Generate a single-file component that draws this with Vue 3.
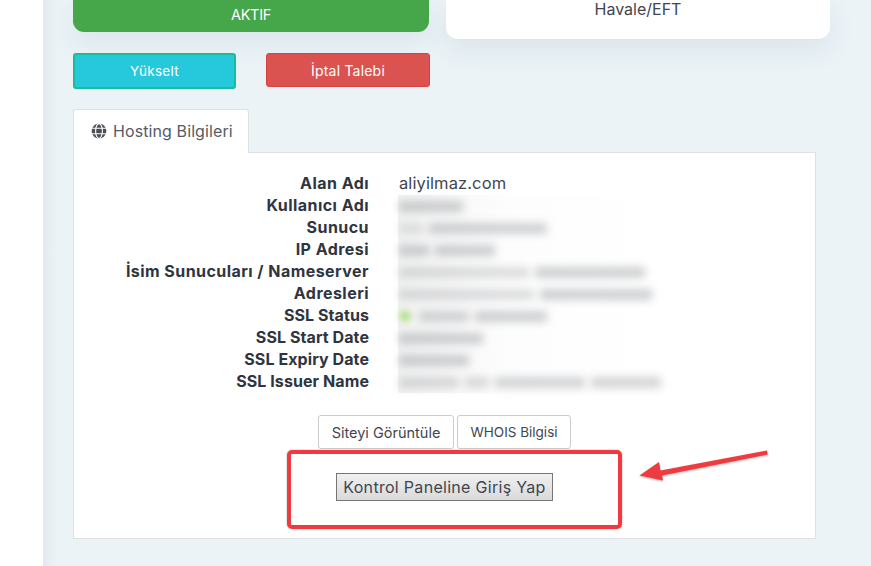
<script setup>
const rows = [
  { label: 'Alan Adı', value: 'aliyilmaz.com' },
  { label: 'Kullanıcı Adı', bars: [{ w: 64, o: 0.4 }] },
  { label: 'Sunucu', bars: [{ w: 24, o: 0.22 }, { w: 118, o: 0.38 }] },
  { label: 'IP Adresi', bars: [{ w: 30, o: 0.4 }, { w: 60, o: 0.4 }] },
  { label: 'İsim Sunucuları / Nameserver', bars: [{ w: 130, o: 0.28 }, { w: 110, o: 0.4 }] },
  { label: 'Adresleri', bars: [{ w: 135, o: 0.28 }, { w: 112, o: 0.4 }] },
  { label: 'SSL Status', green: true, bars: [{ w: 50, o: 0.35 }, { w: 72, o: 0.4 }] },
  { label: 'SSL Start Date', bars: [{ w: 84, o: 0.4 }] },
  { label: 'SSL Expiry Date', bars: [{ w: 70, o: 0.4 }] },
  { label: 'SSL Issuer Name', bars: [{ w: 60, o: 0.3 }, { w: 24, o: 0.3 }, { w: 90, o: 0.36 }, { w: 70, o: 0.36 }] }
]
</script>

<template>
  <div class="page">
    <aside class="side"></aside>
    <main class="main">
      <div class="cards">
        <div class="card-green">AKTIF</div>
        <div class="card-white">Havale/EFT</div>
      </div>
      <div class="actions">
        <button class="btn-info">Yükselt</button>
        <button class="btn-danger">İptal Talebi</button>
      </div>
      <div class="tab">
        <svg class="globe" viewBox="0 0 16 16" width="16" height="16" aria-hidden="true">
          <circle cx="8" cy="8" r="7.4" fill="#4a4f57" />
          <g fill="none" stroke="#fff" stroke-width="1.1">
            <ellipse cx="8" cy="8" rx="3.4" ry="7.4" />
            <path d="M1 5.3h14M1 10.7h14" />
          </g>
        </svg>
        <span>Hosting Bilgileri</span>
      </div>
      <section class="panel">
        <div class="info">
          <div v-for="row in rows" :key="row.label" class="row">
            <div class="label" :class="{ tight: row.label.startsWith('SSL') }">{{ row.label }}</div>
            <div v-if="row.value" class="value">{{ row.value }}</div>
            <div v-else class="masked">
              <span v-if="row.green" class="dot"></span>
              <span
                v-for="(bar, i) in row.bars"
                :key="i"
                class="bar"
                :style="{ width: bar.w + 'px', opacity: bar.o }"
              ></span>
            </div>
          </div>
        </div>
        <div class="links">
          <button class="btn-light">Siteyi Görüntüle</button>
          <button class="btn-light whois">WHOIS Bilgisi</button>
        </div>
        <div class="login">
          <button class="btn-login">Kontrol Paneline Giriş Yap</button>
        </div>
        <div class="mark"></div>
        <svg class="arrow" viewBox="0 0 140 40" width="140" height="40" aria-hidden="true">
          <path d="M129 1.5 129.8 5.5 24 26.5 25 31.5 1.5 26.5 21 13 22.5 21.5Z" fill="#ef3b3f" />
        </svg>
      </section>
    </main>
  </div>
</template>

<style scoped>
.page {
  display: flex;
  width: 871px;
  height: 566px;
  overflow: hidden;
  background: #fff;
  font-family: Inter, "Liberation Sans", sans-serif;
  color: #3f4650;
}
.side {
  flex: 0 0 43px;
  background: #fff;
}
.main {
  flex: 1;
  padding: 0 41px 0 30px;
  background: linear-gradient(90deg, #e3eaee 0, #ebf3f7 14px);
}
.cards {
  display: flex;
  align-items: flex-start;
  gap: 17px;
  height: 40px;
}
.card-green {
  flex: 0 0 356px;
  height: 32px;
  padding-top: 5px;
  box-sizing: border-box;
  border-radius: 0 0 11px 11px;
  background: #46a64a;
  color: #fff;
  font-size: 14.5px;
  letter-spacing: -0.3px;
  line-height: 20px;
  text-align: center;
  box-shadow: 0 10px 28px rgba(40, 60, 80, 0.08);
}
.card-white {
  flex: 0 0 384px;
  height: 40px;
  box-sizing: border-box;
  border-radius: 0 0 12px 12px;
  background: #fff;
  border-bottom: 1px solid #dfe4e8;
  font-size: 16px;
  line-height: 18px;
  text-align: center;
  box-shadow: 0 10px 28px rgba(40, 60, 80, 0.08);
}
.actions {
  display: flex;
  align-items: flex-start;
  gap: 30px;
  margin-top: 13px;
}
.actions button {
  font: inherit;
  color: #fff;
  border-radius: 3px;
  padding: 0;
}
.actions .btn-info {
  width: 163px;
  height: 36px;
  font-size: 13.5px;
  letter-spacing: 0.3px;
  background: #26c8dc;
  border: 2px solid #1abc9c;
}
.actions .btn-danger {
  width: 164px;
  height: 34px;
  font-size: 14px;
  letter-spacing: 0.2px;
  background: #da5350;
  border: 1px solid #d9413e;
}
.tab {
  display: flex;
  align-items: center;
  gap: 6px;
  position: relative;
  z-index: 1;
  width: 176px;
  height: 44px;
  margin-top: 20px;
  margin-bottom: -1px;
  padding: 0 0 2px 17px;
  box-sizing: border-box;
  background: #fff;
  border: 1px solid #dde1e4;
  border-bottom: 0;
  border-radius: 3px 3px 0 0;
  font-size: 16px;
  letter-spacing: 0.1px;
  color: #555b64;
}
.panel {
  position: relative;
  width: 743px;
  height: 387px;
  box-sizing: border-box;
  padding-top: 20px;
  background: #fff;
  border: 1px solid #dde1e4;
}
.row {
  display: flex;
  height: 22px;
}
.label {
  flex: 0 0 295px;
  text-align: right;
  font-size: 16px;
  font-weight: 700;
  line-height: 20px;
  letter-spacing: 0.45px;
  color: #2f3540;
}
.label.tight {
  letter-spacing: 0.08px;
}
.value {
  margin-left: 30px;
  font-size: 16.5px;
  line-height: 20px;
  letter-spacing: 0.1px;
  color: #3f4650;
}
.masked {
  display: flex;
  align-items: center;
  gap: 6px;
  width: 270px;
  height: 22px;
  margin-left: 29px;
  padding-left: 1px;
  box-sizing: border-box;
  background: linear-gradient(90deg, #f2f2f2, #fdfdfd 40%, #fff);
}
.bar {
  display: block;
  height: 11px;
  background: #85898e;
  filter: blur(4px);
}
.dot {
  flex: 0 0 12px;
  height: 12px;
  margin-right: 2px;
  background: #b6e08f;
  border-radius: 50%;
  filter: blur(3px);
}
.links {
  display: flex;
  justify-content: center;
  gap: 3px;
  margin-top: 22px;
}
.btn-light {
  width: 136px;
  height: 34px;
  padding: 0;
  font: inherit;
  font-size: 14.5px;
  color: #3f4650;
  background: #fff;
  border: 1px solid #ccc;
  border-radius: 3px;
}
.btn-light.whois {
  width: 114px;
  font-size: 13.5px;
}
.login {
  display: flex;
  justify-content: center;
  margin-top: 24px;
}
.btn-login {
  width: 217px;
  height: 28px;
  padding: 0;
  font: inherit;
  font-size: 16px;
  letter-spacing: 0.3px;
  color: #3f4650;
  background: linear-gradient(#f0f0f0, #dadada);
  border: 1px solid #767676;
}
.mark {
  position: absolute;
  left: 213px;
  top: 297px;
  width: 335px;
  height: 79px;
  box-sizing: border-box;
  border: 4px solid #ef3b3f;
  border-radius: 5px;
  box-shadow: 0 0 2px rgba(0, 0, 0, 0.35);
}
.arrow {
  position: absolute;
  left: 564px;
  top: 296px;
  filter: drop-shadow(0 1px 1px rgba(0, 0, 0, 0.3));
}
</style>
